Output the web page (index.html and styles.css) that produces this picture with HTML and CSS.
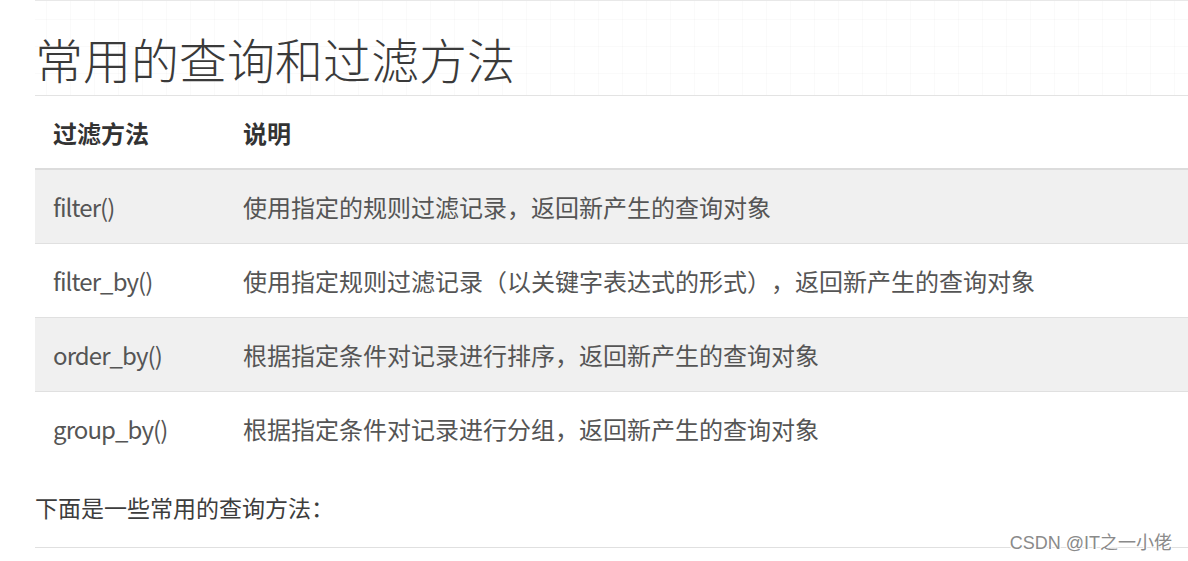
FILE: index.html
```html
<!DOCTYPE html>
<html lang="zh-CN">
  <head>
    <meta charset="UTF-8" />
    <meta name="viewport" content="width=device-width, initial-scale=1.0" />
    <title>常用的查询和过滤方法</title>
    <link rel="stylesheet" href="styles.css">
  </head>
  <body>
    <div class="page">
      <h2 class="title">常用的查询和过滤方法</h2>

      <table class="methods">
        <thead>
          <tr>
            <th class="col-name">过滤方法</th>
            <th>说明</th>
          </tr>
        </thead>
        <tbody>
          <tr>
            <td class="method">filter()</td>
            <td>使用指定的规则过滤记录，返回新产生的查询对象</td>
          </tr>
          <tr>
            <td class="method">filter_by()</td>
            <td>使用指定规则过滤记录（以关键字表达式的形式），返回新产生的查询对象</td>
          </tr>
          <tr>
            <td class="method">order_by()</td>
            <td>根据指定条件对记录进行排序，返回新产生的查询对象</td>
          </tr>
          <tr>
            <td class="method">group_by()</td>
            <td>根据指定条件对记录进行分组，返回新产生的查询对象</td>
          </tr>
        </tbody>
      </table>

      <p class="text">下面是一些常用的查询方法：</p>
      <div class="rule"></div>
    </div>

    <div class="watermark">CSDN @IT之一小佬</div>
  </body>
</html>
```

FILE: styles.css
```css
body {
  margin: 0;
  background: #fff;
  font-family: "Noto Sans CJK SC", "Noto Sans", sans-serif;
  color: #555;
  text-spacing-trim: space-all;
}

.page {
  padding-left: 35px;
}

.title {
  margin: 0;
  height: 94px;
  line-height: 114px;
  font-size: 48px;
  font-weight: 300;
  color: #3a3a3a;
  border-top: 1px solid #e8e8e8;
  border-bottom: 1px solid #e3e3e3;
  background-image:
    linear-gradient(to right, rgba(0, 0, 0, 0.018) 1px, transparent 1px),
    linear-gradient(to bottom, rgba(0, 0, 0, 0.018) 1px, transparent 1px);
  background-size: 24px 27px;
  background-position: -13px 18px;
}

.methods {
  width: 100%;
  border-collapse: collapse;
  font-size: 24px;
}

.methods th,
.methods td {
  text-align: left;
  padding: 0 0 0 18px;
  vertical-align: middle;
}

.methods th {
  height: 72px;
  font-weight: bold;
  color: #333;
  border-bottom: 2px solid #dcdcdc;
}

.methods .col-name {
  width: 172px;
}

.methods td {
  height: 73px;
  border-bottom: 1px solid #e0e0e0;
}

.methods .method {
  letter-spacing: -0.9px;
}

.methods tbody tr:nth-child(odd) td {
  background: #f0f0f0;
}

.methods tbody tr:last-child td {
  border-bottom: none;
}

.text {
  margin: 22px 0 0;
  font-size: 23px;
  line-height: 40px;
  color: #3d3d3d;
}

.rule {
  margin-top: 20px;
  border-top: 1px solid #e0e0e0;
}

.watermark {
  position: absolute;
  right: 16px;
  top: 528px;
  font-size: 18px;
  color: #8a8a8a;
  font-family: "Liberation Sans", "Noto Sans CJK SC", sans-serif;
  text-shadow: 1px 1px 0 #fff, -1px -1px 0 #fff, 1px -1px 0 #fff, -1px 1px 0 #fff;
}
```
